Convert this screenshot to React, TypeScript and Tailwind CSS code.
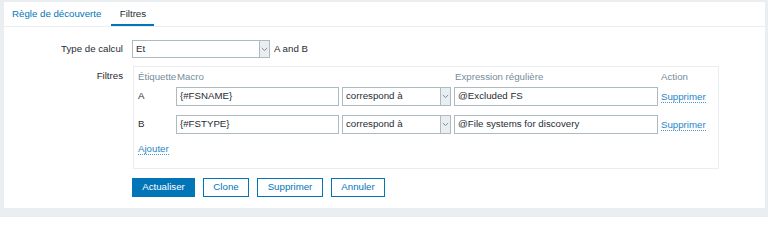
import React from 'react';

const Chevron = () => (
  <svg width="7" height="5" viewBox="0 0 7 5" className="block">
    <path d="M0.8 1 L3.5 3.6 L6.2 1" fill="none" stroke="#768d99" strokeWidth="1" />
  </svg>
);

const Select = ({ value, width, height = 'h-[19px]' }: { value: string; width: string; height?: string }) => (
  <div className={`flex ${height} ${width} border border-[#acbbc2] bg-white`}>
    <div className="flex flex-1 items-center pl-[3px] text-[#1f2c33]">{value}</div>
    <div className="flex w-[10px] items-center justify-center border-l border-[#acbbc2] bg-[#ebeef0]">
      <Chevron />
    </div>
  </div>
);

const Input = ({ value, width }: { value: string; width: string }) => (
  <div className={`flex h-[19px] ${width} items-center border border-[#acbbc2] bg-white pl-[3px] text-[#1f2c33]`}>
    {value}
  </div>
);

const FilterRow = ({ label, macro, regex }: { label: string; macro: string; regex: string }) => (
  <div className="flex items-center">
    <div className="w-[42px] pl-[4px] text-[#1f2c33]">{label}</div>
    <Input value={macro} width="w-[163px]" />
    <div className="ml-[3px]">
      <Select value="correspond à" width="w-[109px]" />
    </div>
    <div className="ml-[3px]">
      <Input value={regex} width="w-[204px]" />
    </div>
    <a className="ml-[3px] border-b border-dotted border-[#4a9bd4] leading-[11px] text-[#1f85c7]">Supprimer</a>
  </div>
);

export default function App() {
  return (
    <div
      className="min-h-[217px] bg-[#ebeef0] pl-[4px] pr-[3px] pt-[2px] text-[9.7px]"
      style={{ fontFamily: '"Liberation Sans", Arial, sans-serif' }}
    >
      <div className="bg-white pb-[11px]">
        {/* tabs */}
        <div className="flex h-[25px] border-b border-[#ebeef0] pl-[8px]">
          <div className="flex items-center pt-[1px] text-[#0275b8]">Règle de découverte</div>
          <div className="ml-[10px] flex w-[43px] items-center justify-center border-b-[2px] border-[#0275b8] pt-[3px] text-[#1f2c33]">
            Filtres
          </div>
        </div>

        <div className="pt-[13px]">
          {/* type de calcul */}
          <div className="flex items-center">
            <div className="w-[119px] text-right text-[#1f2c33]">Type de calcul</div>
            <div className="ml-[9px]">
              <Select value="Et" width="w-[138px]" height="h-[18px]" />
            </div>
            <div className="ml-[4px] text-[#1f2c33]">A and B</div>
          </div>

          {/* filtres */}
          <div className="mt-[8px] flex items-start">
            <div className="w-[119px] pt-[3px] text-right text-[#1f2c33]">Filtres</div>
            <div className="ml-[10px] w-[586px] border border-[#ebeef0] pb-[11px] pt-[3px]">
              <div className="flex h-[14px] items-center text-[#768d99]">
                <div className="w-[42px] pl-[4px]">Étiquette</div>
                <div className="w-[166px] pl-[1px]">Macro</div>
                <div className="w-[112px]"></div>
                <div className="w-[206px] pl-[1px]">Expression régulière</div>
                <div className="pl-[1px]">Action</div>
              </div>
              <div className="mt-[3px]">
                <FilterRow label="A" macro="{#FSNAME}" regex="@Excluded FS" />
              </div>
              <div className="mt-[9px]">
                <FilterRow label="B" macro="{#FSTYPE}" regex="@File systems for discovery" />
              </div>
              <div className="mt-[8px] pl-[4px]">
                <a className="border-b border-dotted border-[#4a9bd4] leading-[11px] text-[#1f85c7]">Ajouter</a>
              </div>
            </div>
          </div>

          {/* buttons */}
          <div className="ml-[128px] mt-[9px] flex gap-[8px]">
            <button className="h-[19px] w-[63px] border border-[#0275b8] bg-[#0275b8] text-white">Actualiser</button>
            <button className="h-[19px] w-[46px] border border-[#0275b8] bg-white text-[#0275b8]">Clone</button>
            <button className="h-[19px] w-[66px] border border-[#0275b8] bg-white text-[#0275b8]">Supprimer</button>
            <button className="h-[19px] w-[54px] border border-[#0275b8] bg-white text-[#0275b8]">Annuler</button>
          </div>
        </div>
      </div>
    </div>
  );
}
